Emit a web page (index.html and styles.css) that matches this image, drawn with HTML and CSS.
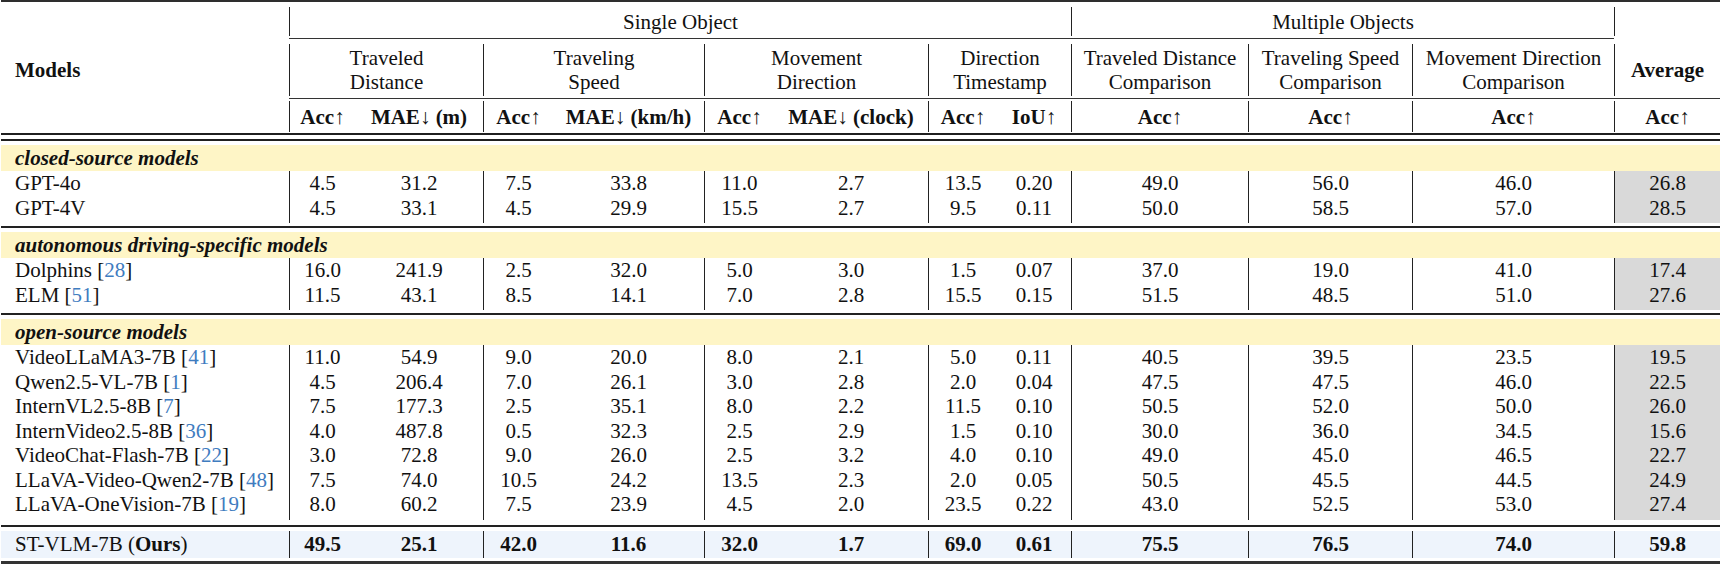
FILE: index.html
```html
<!DOCTYPE html>
<html lang="en">
<head>
<meta charset="utf-8">
<title>Results table</title>
<link rel="stylesheet" href="styles.css">
</head>
<body>
<table class="results">
  <colgroup>
    <col class="w-model"><col class="w-66"><col class="w-128"><col class="w-70"><col class="w-151"><col class="w-70"><col class="w-154"><col class="w-69"><col class="w-74"><col class="w-177"><col class="w-164"><col class="w-202"><col class="w-106">
  </colgroup>
  <tbody>
    <tr class="rule-top"><td colspan="13"></td></tr>
    <tr class="h1">
      <td class="models" rowspan="5">Models</td>
      <td class="vl" colspan="8">Single Object</td>
      <td class="vl" colspan="3">Multiple Objects</td>
      <td class="vl"></td>
    </tr>
    <tr class="cmid"><td class="line" colspan="11"></td><td></td></tr>
    <tr class="h2">
      <td class="vl" colspan="2">Traveled<br>Distance</td>
      <td class="vl" colspan="2">Traveling<br>Speed</td>
      <td class="vl" colspan="2">Movement<br>Direction</td>
      <td class="vl" colspan="2">Direction<br>Timestamp</td>
      <td class="vl">Traveled Distance<br>Comparison</td>
      <td class="vl">Traveling Speed<br>Comparison</td>
      <td class="vl">Movement Direction<br>Comparison</td>
      <td class="vl b">Average</td>
    </tr>
    <tr class="cmid2"><td class="line" colspan="12"></td></tr>
    <tr class="h3 b">
      <td class="vl">Acc<span class="arr">↑</span></td>
      <td>MAE<span class="arr">↓</span> (m)</td>
      <td class="vl">Acc<span class="arr">↑</span></td>
      <td>MAE<span class="arr">↓</span> (km/h)</td>
      <td class="vl">Acc<span class="arr">↑</span></td>
      <td>MAE<span class="arr">↓</span> (clock)</td>
      <td class="vl">Acc<span class="arr">↑</span></td>
      <td>IoU<span class="arr">↑</span></td>
      <td class="vl">Acc<span class="arr">↑</span></td>
      <td class="vl">Acc<span class="arr">↑</span></td>
      <td class="vl">Acc<span class="arr">↑</span></td>
      <td class="vl">Acc<span class="arr">↑</span></td>
    </tr>
    <tr class="rule-double"><td colspan="13"></td></tr>

    <tr class="group"><td colspan="13">closed-source models</td></tr>
    <tr class="data">
      <td class="name">GPT-4o</td>
      <td class="vl">4.5</td><td>31.2</td><td class="vl">7.5</td><td>33.8</td><td class="vl">11.0</td><td>2.7</td><td class="vl">13.5</td><td>0.20</td><td class="vl">49.0</td><td class="vl">56.0</td><td class="vl">46.0</td><td class="vl avg">26.8</td>
    </tr>
    <tr class="data last">
      <td class="name">GPT-4V</td>
      <td class="vl">4.5</td><td>33.1</td><td class="vl">4.5</td><td>29.9</td><td class="vl">15.5</td><td>2.7</td><td class="vl">9.5</td><td>0.11</td><td class="vl">50.0</td><td class="vl">58.5</td><td class="vl">57.0</td><td class="vl avg">28.5</td>
    </tr>
    <tr class="rule-mid"><td colspan="13"></td></tr>

    <tr class="group"><td colspan="13">autonomous driving-specific models</td></tr>
    <tr class="data">
      <td class="name">Dolphins [<span class="cite">28</span>]</td>
      <td class="vl">16.0</td><td>241.9</td><td class="vl">2.5</td><td>32.0</td><td class="vl">5.0</td><td>3.0</td><td class="vl">1.5</td><td>0.07</td><td class="vl">37.0</td><td class="vl">19.0</td><td class="vl">41.0</td><td class="vl avg">17.4</td>
    </tr>
    <tr class="data last">
      <td class="name">ELM [<span class="cite">51</span>]</td>
      <td class="vl">11.5</td><td>43.1</td><td class="vl">8.5</td><td>14.1</td><td class="vl">7.0</td><td>2.8</td><td class="vl">15.5</td><td>0.15</td><td class="vl">51.5</td><td class="vl">48.5</td><td class="vl">51.0</td><td class="vl avg">27.6</td>
    </tr>
    <tr class="rule-mid"><td colspan="13"></td></tr>

    <tr class="group"><td colspan="13">open-source models</td></tr>
    <tr class="data">
      <td class="name">VideoLLaMA3-7B [<span class="cite">41</span>]</td>
      <td class="vl">11.0</td><td>54.9</td><td class="vl">9.0</td><td>20.0</td><td class="vl">8.0</td><td>2.1</td><td class="vl">5.0</td><td>0.11</td><td class="vl">40.5</td><td class="vl">39.5</td><td class="vl">23.5</td><td class="vl avg">19.5</td>
    </tr>
    <tr class="data">
      <td class="name">Qwen2.5-VL-7B [<span class="cite">1</span>]</td>
      <td class="vl">4.5</td><td>206.4</td><td class="vl">7.0</td><td>26.1</td><td class="vl">3.0</td><td>2.8</td><td class="vl">2.0</td><td>0.04</td><td class="vl">47.5</td><td class="vl">47.5</td><td class="vl">46.0</td><td class="vl avg">22.5</td>
    </tr>
    <tr class="data">
      <td class="name">InternVL2.5-8B [<span class="cite">7</span>]</td>
      <td class="vl">7.5</td><td>177.3</td><td class="vl">2.5</td><td>35.1</td><td class="vl">8.0</td><td>2.2</td><td class="vl">11.5</td><td>0.10</td><td class="vl">50.5</td><td class="vl">52.0</td><td class="vl">50.0</td><td class="vl avg">26.0</td>
    </tr>
    <tr class="data">
      <td class="name">InternVideo2.5-8B [<span class="cite">36</span>]</td>
      <td class="vl">4.0</td><td>487.8</td><td class="vl">0.5</td><td>32.3</td><td class="vl">2.5</td><td>2.9</td><td class="vl">1.5</td><td>0.10</td><td class="vl">30.0</td><td class="vl">36.0</td><td class="vl">34.5</td><td class="vl avg">15.6</td>
    </tr>
    <tr class="data">
      <td class="name">VideoChat-Flash-7B [<span class="cite">22</span>]</td>
      <td class="vl">3.0</td><td>72.8</td><td class="vl">9.0</td><td>26.0</td><td class="vl">2.5</td><td>3.2</td><td class="vl">4.0</td><td>0.10</td><td class="vl">49.0</td><td class="vl">45.0</td><td class="vl">46.5</td><td class="vl avg">22.7</td>
    </tr>
    <tr class="data">
      <td class="name">LLaVA-Video-Qwen2-7B [<span class="cite">48</span>]</td>
      <td class="vl">7.5</td><td>74.0</td><td class="vl">10.5</td><td>24.2</td><td class="vl">13.5</td><td>2.3</td><td class="vl">2.0</td><td>0.05</td><td class="vl">50.5</td><td class="vl">45.5</td><td class="vl">44.5</td><td class="vl avg">24.9</td>
    </tr>
    <tr class="data last">
      <td class="name">LLaVA-OneVision-7B [<span class="cite">19</span>]</td>
      <td class="vl">8.0</td><td>60.2</td><td class="vl">7.5</td><td>23.9</td><td class="vl">4.5</td><td>2.0</td><td class="vl">23.5</td><td>0.22</td><td class="vl">43.0</td><td class="vl">52.5</td><td class="vl">53.0</td><td class="vl avg">27.4</td>
    </tr>
    <tr class="rule-mid rule-final"><td colspan="13"></td></tr>

    <tr class="ours">
      <td class="name">ST-VLM-7B (<b>Ours</b>)</td>
      <td class="vl b">49.5</td><td class="b">25.1</td><td class="vl b">42.0</td><td class="b">11.6</td><td class="vl b">32.0</td><td class="b">1.7</td><td class="vl b">69.0</td><td class="b">0.61</td><td class="vl b">75.5</td><td class="vl b">76.5</td><td class="vl b">74.0</td><td class="vl b">59.8</td>
    </tr>
    <tr class="rule-bottom"><td colspan="13"></td></tr>
  </tbody>
</table>
</body>
</html>
```

FILE: styles.css
```css
html, body {
  margin: 0;
  padding: 0;
  background: #ffffff;
}

body {
  font-family: "Liberation Serif", "Times New Roman", serif;
  font-size: 21px;
  color: #111111;
}

.results {
  border-collapse: separate;
  border-spacing: 0;
  table-layout: fixed;
  width: 1719px;
  margin-left: 1px;
}

.results td {
  padding: 0;
  text-align: center;
  vertical-align: middle;
  white-space: nowrap;
  line-height: 24px;
}

/* column widths */
.w-model { width: 288px; }
.w-66 { width: 66px; }
.w-128 { width: 128px; }
.w-70 { width: 70px; }
.w-151 { width: 151px; }
.w-154 { width: 154px; }
.w-69 { width: 69px; }
.w-74 { width: 74px; }
.w-177 { width: 177px; }
.w-164 { width: 164px; }
.w-202 { width: 202px; }
.w-106 { width: 106px; }

.vl { border-left: 1px solid #222222; }
.b { font-weight: 700; }
.arr { font-weight: 400; }
.cite { color: #3f7cbf; }

/* rules */
.rule-top td {
  height: 7px;
  line-height: 0;
  background: linear-gradient(#2e2e2e, #2e2e2e) 0 0 / 100% 2px no-repeat;
}

.cmid td,
.cmid2 td {
  line-height: 0;
}
.cmid td { height: 8px; }
.cmid2 td { height: 5px; }
.cmid td.line,
.cmid2 td.line {
  background: linear-gradient(#333333, #333333) 0 2px / 100% 1px no-repeat;
}

.rule-double td {
  height: 13px;
  line-height: 0;
  background:
    linear-gradient(#1f1f1f, #1f1f1f) 0 1px / 100% 2px no-repeat,
    linear-gradient(#1f1f1f, #1f1f1f) 0 7px / 100% 2px no-repeat;
}

.rule-mid td {
  height: 9px;
  line-height: 0;
  background: linear-gradient(#222222, #222222) 0 3px / 100% 2px no-repeat;
}

.rule-final td {
  height: 11px;
  background-position: 0 5px;
}

.rule-bottom td {
  height: 7px;
  line-height: 0;
  background: linear-gradient(#333333, #333333) 0 3px / 100% 3px no-repeat;
}

/* header */
.h1 td { height: 29px; }
.h2 td { height: 52px; }
.h3 td { height: 31px; }

.models {
  text-align: left !important;
  padding-left: 14px !important;
  font-weight: 700;
}

/* body */
.group td {
  height: 26px;
  text-align: left;
  padding-left: 14px;
  background: #fef5c6;
  font-weight: 700;
  font-style: italic;
}

.data td {
  line-height: 24.5px;
}
.data.last td { padding-bottom: 3px; }

.name {
  text-align: left !important;
  padding-left: 14px !important;
}

.avg { background: #d9d9d9; }

.ours td {
  height: 27px;
  background: #eef4fc;
}
```
